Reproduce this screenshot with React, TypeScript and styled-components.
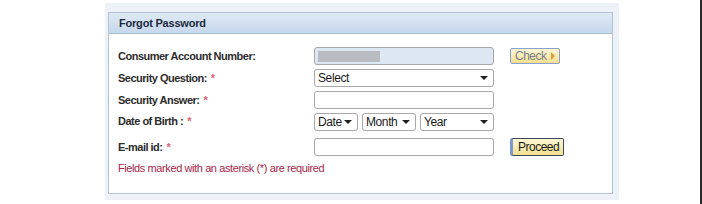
import React from "react";
import styled, { createGlobalStyle } from "styled-components";

const GlobalStyle = createGlobalStyle`
    html, body {
        margin: 0;
        padding: 0;
        background: #ffffff;
    }
    body {
        font-family: "Liberation Sans", Arial, sans-serif;
    }
`;

const Page = styled.div`
    width: 595px;
    height: 204px;
    border-right: 2px solid #2a2a2a;
    display: flex;
    padding-left: 105px;
`;

const Shell = styled.div`
    margin-top: 3px;
    width: 514px;
    height: 197px;
    background: #edf2f8;
    padding: 9px 6px 6px 3px;
    box-sizing: border-box;
`;

const Box = styled.div`
    height: 100%;
    background: #ffffff;
    border: 1px solid #b4c4d4;
    box-sizing: border-box;
    display: flex;
    flex-direction: column;
`;

const Header = styled.div`
    height: 20px;
    background: linear-gradient(#dfe9f5, #c6d8ec);
    border-bottom: 1px solid #aabdd2;
    padding-left: 10px;
    display: flex;
    align-items: center;
    font-size: 11px;
    font-weight: bold;
    color: #1e2a3c;
    letter-spacing: -0.2px;
`;

const Form = styled.div`
    display: grid;
    grid-template-columns: 196px 180px auto;
    grid-auto-rows: 22px;
    padding: ${({ $top }: { $top: number }) => `${$top}px 0 0 9px`};
    align-items: center;
`;

const Label = styled.div`
    font-size: 11px;
    font-weight: bold;
    color: #2c2c2c;
    letter-spacing: -0.5px;
    white-space: nowrap;
    margin-top: ${({ $up = 0 }: { $up?: number }) => -$up * 2}px;
`;

const Star = styled.span`
    color: #e0607a;
    margin-left: 4px;
`;

const Field = styled.div`
    height: 18px;
    border: 1px solid #a8a8a8;
    border-radius: 3px;
    box-sizing: border-box;
    background: ${({ $tint = false }: { $tint?: boolean }) =>
        $tint ? "#dde7f2" : "#ffffff"};
    display: flex;
    align-items: center;
    padding-left: 3px;
`;

const Masked = styled.div`
    width: 62px;
    height: 11px;
    background: #b9bcc2;
    filter: blur(0.5px);
`;

const Picker = styled.div`
    height: 18px;
    flex: ${({ $w }: { $w: number }) => `0 0 ${$w}px`};
    border: 1px solid #a8a8a8;
    border-radius: 3px;
    box-sizing: border-box;
    background: #ffffff;
    display: flex;
    align-items: center;
    justify-content: space-between;
    padding: 0 5px 0 3px;
    font-size: 12px;
    color: #1a1a1a;
    letter-spacing: -0.4px;
`;

const Arrow = styled.span`
    width: 0;
    height: 0;
    border-left: 4px solid transparent;
    border-right: 4px solid transparent;
    border-top: 4px solid #202020;
`;

const DateRow = styled.div`
    display: flex;
    gap: 4px;
`;

const Button = styled.div`
    justify-self: start;
    margin-left: 16px;
    height: ${({ $main = false }: { $main?: boolean }) => ($main ? 18 : 16)}px;
    box-sizing: border-box;
    border: 1px solid
        ${({ $main = false }: { $main?: boolean }) => ($main ? "#3e4656" : "#8d9fcc")};
    border-left: ${({ $main = false }: { $main?: boolean }) =>
        $main ? "3px solid #7d9ad0" : "1px solid #8d9fcc"};
    border-radius: 2px;
    background: linear-gradient(#fdf7d6, #f3df8f);
    display: flex;
    align-items: center;
    gap: 4px;
    padding: ${({ $main = false }: { $main?: boolean }) => ($main ? "0 4px 0 5px" : "0 4px 0 4px")};
    font-size: 12px;
    letter-spacing: -0.5px;
    color: ${({ $main = false }: { $main?: boolean }) => ($main ? "#1a1a1a" : "#7a7f8c")};
`;

const Play = styled.span`
    width: 0;
    height: 0;
    border-top: 4px solid transparent;
    border-bottom: 4px solid transparent;
    border-left: 4px solid #e49a3a;
`;

const Note = styled.div`
    grid-column: 1 / 4;
    font-size: 11px;
    color: #a6264a;
    letter-spacing: -0.4px;
    margin-top: -3px;
`;

export default function App() {
    return (
        <>
            <GlobalStyle />
            <Page>
                <Shell>
                    <Box>
                        <Header>Forgot Password</Header>
                        <Form $top={11}>
                            <Label>Consumer Account Number:</Label>
                            <Field $tint>
                                <Masked />
                            </Field>
                            <Button>
                                Check <Play />
                            </Button>

                            <Label>
                                Security Question:<Star>*</Star>
                            </Label>
                            <DateRow>
                                <Picker $w={180}>
                                    Select <Arrow />
                                </Picker>
                            </DateRow>
                            <span />

                            <Label>
                                Security Answer:<Star>*</Star>
                            </Label>
                            <Field />
                            <span />

                            <Label $up={1}>
                                Date of Birth :<Star>*</Star>
                            </Label>
                            <DateRow>
                                <Picker $w={44}>
                                    Date <Arrow />
                                </Picker>
                                <Picker $w={54}>
                                    Month <Arrow />
                                </Picker>
                                <Picker $w={74}>
                                    Year <Arrow />
                                </Picker>
                            </DateRow>
                            <span />
                        </Form>
                        <Form $top={3}>
                            <Label>
                                E-mail id:<Star>*</Star>
                            </Label>
                            <Field />
                            <Button $main>Proceed</Button>
                            <Note>Fields marked with an asterisk (*) are required</Note>
                        </Form>
                    </Box>
                </Shell>
            </Page>
        </>
    );
}
